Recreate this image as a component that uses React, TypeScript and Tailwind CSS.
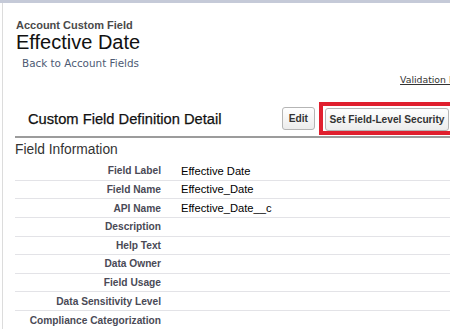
import React from "react";

const rows: [string, string][] = [
  ["Field Label", "Effective Date"],
  ["Field Name", "Effective_Date"],
  ["API Name", "Effective_Date__c"],
  ["Description", ""],
  ["Help Text", ""],
  ["Data Owner", ""],
  ["Field Usage", ""],
  ["Data Sensitivity Level", ""],
  ["Compliance Categorization", ""],
];

export default function App() {
  return (
    <div className="w-[450px] h-[329px] overflow-hidden bg-white" style={{ fontFamily: '"Liberation Sans", Arial, sans-serif' }}>
      <div className="h-[3px] bg-[#c5cad8]" />
      <div className="flex h-[326px]">
        <div className="w-[2px] shrink-0" />
        <div className="w-px shrink-0 bg-[#dcdcdc]" />
        <div className="flex-1 min-w-0">
          <div className="pl-[13px] pt-[16px]">
            <div className="text-[11px] leading-[13px] font-bold text-[#4a4a4a]">Account Custom Field</div>
            <div className="text-[20px] leading-[22px] text-[#111] -mt-[1px]">Effective Date</div>
            <div className="pl-[6px] mt-[4px] text-[10.4px] leading-[12px] text-[#4d5a73]" style={{ fontFamily: '"DejaVu Sans", Verdana, sans-serif' }}>
              Back to Account Fields
            </div>
          </div>
          <div className="flex justify-end mt-[5px] h-[11px] overflow-visible">
            <span className="text-[9.3px] leading-[12px] text-[#333] underline whitespace-nowrap -mr-[24px]" style={{ fontFamily: '"DejaVu Sans", Verdana, sans-serif' }}>
              Validation Rules
            </span>
          </div>
          <div className="ml-[12px] mt-[17px] flex items-center justify-between border-b-[2px] border-[#9c9c9c] h-[36px] pb-[1px]">
            <div className="pl-[13px] text-[14.7px] text-[#111] leading-[18px] [-webkit-text-stroke:0.25px_#111]">
              Custom Field Definition Detail
            </div>
            <div className="flex items-center gap-[4px]">
              <button className="h-[23px] px-[6px] border border-[#b5b5b5] rounded-[3px] bg-gradient-to-b from-white to-[#ececec] text-[10.2px] font-bold text-[#333]">
                Edit
              </button>
              <div className="border-[4px] border-[#e01f2e] pl-[2px] pr-[1px] py-[0px] -mr-[4px]">
                <button className="h-[23px] w-[124px] border border-[#b5b5b5] rounded-[3px] bg-gradient-to-b from-white to-[#ececec] text-[10.2px] font-bold text-[#333] whitespace-nowrap">
                  Set Field-Level Security
                </button>
              </div>
            </div>
          </div>
          <div className="ml-[12px]">
            <div className="pt-[4px] h-[24.25px] text-[13.8px] leading-[15px] text-[#333]">Field Information</div>
            {rows.map(([label, value], i) => (
              <div key={label} className={`flex h-[18.6px] items-center ${i < rows.length - 1 ? "border-b border-[#e3e3e7]" : ""}`}>
                <div className="w-[146px] shrink-0 text-right text-[10.2px] font-bold text-[#4a4a56] whitespace-nowrap">{label}</div>
                <div className="pl-[20px] text-[11.2px] text-[#000] whitespace-nowrap">{value}</div>
              </div>
            ))}
          </div>
        </div>
      </div>
    </div>
  );
}
